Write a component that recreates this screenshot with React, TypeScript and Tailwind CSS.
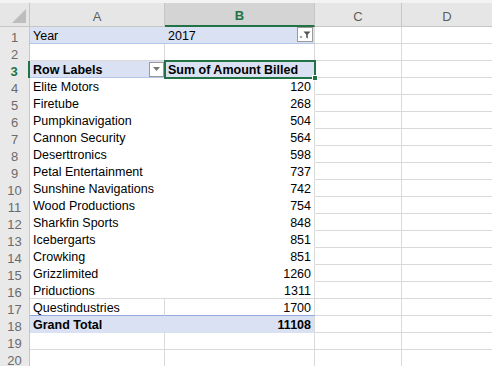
import React from 'react';

interface PivotRow {
  label: string;
  amount: number;
}

const pivotRows: PivotRow[] = [
  { label: 'Elite Motors', amount: 120 },
  { label: 'Firetube', amount: 268 },
  { label: 'Pumpkinavigation', amount: 504 },
  { label: 'Cannon Security', amount: 564 },
  { label: 'Deserttronics', amount: 598 },
  { label: 'Petal Entertainment', amount: 737 },
  { label: 'Sunshine Navigations', amount: 742 },
  { label: 'Wood Productions', amount: 754 },
  { label: 'Sharkfin Sports', amount: 848 },
  { label: 'Icebergarts', amount: 851 },
  { label: 'Crowking', amount: 851 },
  { label: 'Grizzlimited', amount: 1260 },
  { label: 'Priductions', amount: 1311 },
  { label: 'Questindustries', amount: 1700 },
];

const RowHead = ({ n, active }: { n: number; active?: boolean }) => (
  <div
    className={`w-[30px] shrink-0 flex items-center justify-center pt-[3px] bg-[#e9e9e9] text-[13px] ${
      active
        ? 'border-r-2 border-[#217346] text-[#217346] font-bold'
        : 'border-r border-[#c6c6c6] text-[#6b6b6b]'
    }`}
  >
    {n}
  </div>
);

// empty C and D cells
const Tail = () => (
  <>
    <div className="w-[87px] shrink-0 border-r border-b border-[#d9d9d9]" />
    <div className="flex-1 border-b border-[#d9d9d9]" />
  </>
);

const FilterIcon = () => (
  <svg width="12" height="10" viewBox="0 0 12 10">
    <path d="M0.5 6.5 L3.5 6.5 L2 8 Z" fill="#555" />
    <path d="M4.5 1.5 L11.5 1.5 L8.8 4.6 L8.8 8.5 L7.2 7.6 L7.2 4.6 Z" fill="#555" />
  </svg>
);

export default function App() {
  return (
    <div className="w-[492px] h-[366px] overflow-hidden bg-white font-['Liberation_Sans',Arial,sans-serif] text-[12.5px] leading-none text-black">
      {/* Column headers */}
      <div className="flex h-[27px] border-t-[3px] border-[#f3f3f3] bg-[#e6e6e6] text-[#5e5e5e] text-[13px]">
        <div className="w-[30px] shrink-0 flex items-end justify-end pr-[3px] pb-[3px] border-r border-b border-[#c6c6c6]">
          <svg width="14" height="14" viewBox="0 0 14 14">
            <polygon points="14,0 14,14 0,14" fill="#bdbdbd" />
          </svg>
        </div>
        <div className="w-[135px] shrink-0 flex items-center justify-center pt-[3px] border-r border-b border-[#c6c6c6]">
          A
        </div>
        <div className="w-[150px] shrink-0 flex items-center justify-center pt-[3px] bg-[#d4d4d4] border-r border-[#c6c6c6] border-b-2 border-b-[#217346] text-[#217346] font-bold">
          B
        </div>
        <div className="w-[87px] shrink-0 flex items-center justify-center pt-[3px] border-r border-b border-[#c6c6c6]">
          C
        </div>
        <div className="flex-1 flex items-center justify-center pt-[3px] border-b border-[#c6c6c6]">
          D
        </div>
      </div>

      {/* Row 1 - report filter */}
      <div className="flex h-[17px]">
        <RowHead n={1} />
        <div className="w-[135px] shrink-0 flex items-center pl-[3px] pt-[3px] bg-[#d9e1f2] border-b border-[#b4c6e7]">
          Year
        </div>
        <div className="w-[150px] shrink-0 flex items-center justify-between pl-[3px] pr-[1px] bg-[#d9e1f2] border-b border-[#b4c6e7] border-r border-r-[#d9d9d9]">
          <span className="pt-[3px]">2017</span>
          <div className="w-[16px] h-[15px] mb-[1px] flex items-center justify-center bg-white border border-[#9a9a9a]">
            <FilterIcon />
          </div>
        </div>
        <Tail />
      </div>

      {/* Row 2 */}
      <div className="flex h-[17px]">
        <RowHead n={2} />
        <div className="w-[135px] shrink-0 border-r border-b border-[#d9d9d9]" />
        <div className="w-[150px] shrink-0 border-r border-b border-[#d9d9d9]" />
        <Tail />
      </div>

      {/* Row 3 - pivot header */}
      <div className="flex h-[17px]">
        <RowHead n={3} active />
        <div className="w-[135px] shrink-0 flex items-center justify-between pl-[3px] pr-[1px] bg-[#d9e1f2] border-b border-[#b4c6e7] font-bold">
          <span className="pt-[3px]">Row Labels</span>
          <div className="w-[15px] h-[15px] flex items-center justify-center bg-white border border-[#9a9a9a]">
            <svg width="7" height="4" viewBox="0 0 7 4">
              <polygon points="0,0 7,0 3.5,4" fill="#777" />
            </svg>
          </div>
        </div>
        <div className="relative w-[150px] shrink-0 flex items-center pl-[3px] pt-[3px] bg-[#d9e1f2] border-b border-[#b4c6e7] border-r border-r-[#d9d9d9] font-bold">
          Sum of Amount Billed
          <div className="absolute -left-[1px] -top-[1px] -right-[2px] -bottom-[2px] border-2 border-[#217346]" />
          <div className="absolute -right-[4px] -bottom-[4px] w-[6px] h-[6px] bg-[#217346] border border-white" />
        </div>
        <Tail />
      </div>

      {/* Rows 4-17 - pivot body */}
      {pivotRows.map((row, i) => {
        const last = i === pivotRows.length - 1;
        const beforeLast = i === pivotRows.length - 2;
        return (
          <div key={row.label} className="flex h-[17px]">
            <RowHead n={i + 4} />
            <div
              className={`w-[135px] shrink-0 flex items-center pl-[3px] pt-[3px] border-b ${
                last
                  ? 'border-[#8ea9db] border-r border-r-[#d9d9d9]'
                  : beforeLast
                  ? 'border-[#d9d9d9]'
                  : 'border-white'
              }`}
            >
              {row.label}
            </div>
            <div
              className={`w-[150px] shrink-0 flex items-center justify-end pr-[3px] pt-[3px] border-r border-r-[#d9d9d9] border-b ${
                last ? 'border-b-[#8ea9db]' : beforeLast ? 'border-b-[#d9d9d9]' : 'border-b-white'
              }`}
            >
              {row.amount}
            </div>
            <Tail />
          </div>
        );
      })}

      {/* Row 18 - grand total */}
      <div className="flex h-[17px]">
        <RowHead n={18} />
        <div className="w-[135px] shrink-0 flex items-center pl-[3px] pt-[3px] bg-[#d9e1f2] border-b border-[#d9e1f2] font-bold">
          Grand Total
        </div>
        <div className="w-[150px] shrink-0 flex items-center justify-end pr-[3px] pt-[3px] bg-[#d9e1f2] border-b border-[#d9e1f2] border-r border-r-[#d9d9d9] font-bold">
          11108
        </div>
        <Tail />
      </div>

      {[19, 20].map((n) => (
        <div key={n} className="flex h-[17px]">
          <RowHead n={n} />
          <div className="w-[135px] shrink-0 border-r border-b border-[#d9d9d9]" />
          <div className="w-[150px] shrink-0 border-r border-b border-[#d9d9d9]" />
          <Tail />
        </div>
      ))}
    </div>
  );
}
